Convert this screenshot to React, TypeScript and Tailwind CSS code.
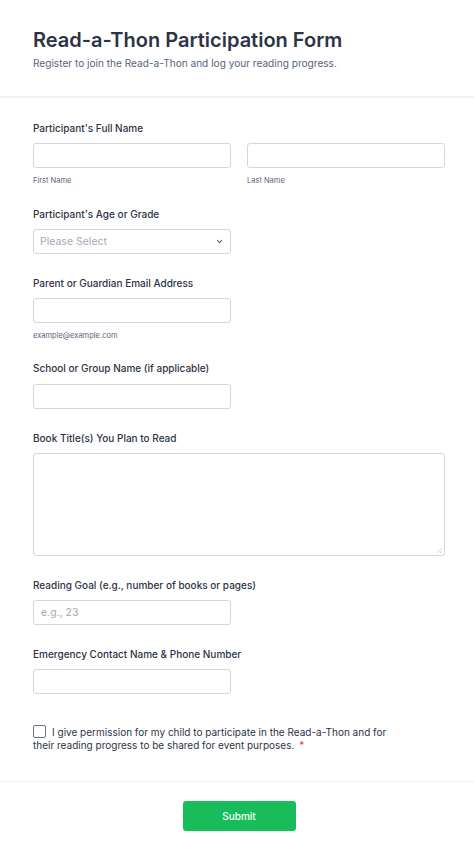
import React from "react";

const font = { fontFamily: "Inter, 'Noto Sans', sans-serif" };

const inputClass =
	"block h-[25px] w-full rounded-[3px] border border-[#d3d6dc] bg-white px-[7px] text-[10.5px] text-[#2c3345] outline-none placeholder:text-[#a4a9b4]";

function Label({ children }: { children: React.ReactNode }) {
	return (
		<label className="block text-[10px] font-medium leading-[14px] text-[#2c3345]">
			{children}
		</label>
	);
}

function Sub({ children }: { children: React.ReactNode }) {
	return (
		<span className="mt-[8px] block text-[7.5px] leading-[10px] text-[#57647e]">
			{children}
		</span>
	);
}

export default function App() {
	return (
		<div className="min-h-[856px] w-[474px] bg-white" style={font}>
			{/* header */}
			<div className="border-b-2 border-[#eff0f2] pb-[26px] pl-[33px] pr-[29px] pt-[27px]">
				<h1 className="text-[20px] font-semibold leading-[26px] text-[#2c3345]">
					Read-a-Thon Participation Form
				</h1>
				<p className="mt-[3px] text-[10.1px] leading-[14px] text-[#57647e]">
					Register to join the Read-a-Thon and log your reading progress.
				</p>
			</div>

			<form className="pl-[33px] pr-[29px]" onSubmit={(e) => e.preventDefault()}>
				{/* full name */}
				<div className="pt-[23px]">
					<Label>Participant's Full Name</Label>
					<div className="mt-[8px] grid grid-cols-2 gap-[16px]">
						<div>
							<input type="text" className={inputClass} />
							<Sub>First Name</Sub>
						</div>
						<div>
							<input type="text" className={inputClass} />
							<Sub>Last Name</Sub>
						</div>
					</div>
				</div>

				{/* age */}
				<div className="pt-[21px]">
					<Label>Participant's Age or Grade</Label>
					<div className="relative mt-[8px] w-[198px]">
						<select
							defaultValue=""
							className="block h-[25px] w-full appearance-none rounded-[3px] border border-[#d3d6dc] bg-white px-[6px] text-[10.5px] text-[#a4a9b4] outline-none"
						>
							<option value="" disabled>
								Please Select
							</option>
							<option>Kindergarten</option>
							<option>Grade 1</option>
							<option>Grade 2</option>
						</select>
						<svg
							className="pointer-events-none absolute right-[8px] top-[9px] h-[7px] w-[7px] text-[#57647e]"
							viewBox="0 0 10 10"
							fill="none"
							stroke="currentColor"
							strokeWidth={1.6}
						>
							<path d="M2 3.5l3 3 3-3" strokeLinecap="round" strokeLinejoin="round" />
						</svg>
					</div>
				</div>

				{/* email */}
				<div className="pt-[22px]">
					<Label>Parent or Guardian Email Address</Label>
					<div className="mt-[8px] w-[198px]">
						<input type="email" className={inputClass} />
					</div>
					<Sub>example@example.com</Sub>
				</div>

				{/* school */}
				<div className="pt-[20px]">
					<Label>School or Group Name (if applicable)</Label>
					<div className="mt-[9px] w-[198px]">
						<input type="text" className={inputClass} />
					</div>
				</div>

				{/* books */}
				<div className="pt-[22px]">
					<Label>Book Title(s) You Plan to Read</Label>
					<div className="relative mt-[8px]">
						<textarea className="block h-[103px] w-full resize-none rounded-[3px] border border-[#d3d6dc] bg-white px-2 py-1 text-[10.5px] text-[#2c3345] outline-none" />
						<svg
							className="pointer-events-none absolute bottom-[3px] right-[3px] h-[6px] w-[6px]"
							viewBox="0 0 6 6"
							stroke="#c4c7cd"
							strokeWidth={0.8}
						>
							<path d="M6 1L1 6M6 4L4 6" />
						</svg>
					</div>
				</div>

				{/* goal */}
				<div className="pt-[22px]">
					<Label>Reading Goal (e.g., number of books or pages)</Label>
					<div className="mt-[8px] w-[198px]">
						<input type="text" placeholder="e.g., 23" className={inputClass} />
					</div>
				</div>

				{/* emergency */}
				<div className="pt-[22px]">
					<Label>Emergency Contact Name &amp; Phone Number</Label>
					<div className="mt-[8px] w-[198px]">
						<input type="text" className={inputClass} />
					</div>
				</div>

				{/* permission */}
				<div className="pb-[29px] pt-[31px]">
					<p className="w-[370px] text-[10px] leading-[13px] text-[#2c3345]">
						<input
							type="checkbox"
							className="mr-[6px] inline-block h-[13px] w-[13px] appearance-none rounded-[2px] border border-[#6b7280] align-[-2px]"
						/>
						I give permission for my child to participate in the Read-a-Thon and for
						their reading progress to be shared for event purposes.
						<span className="ml-[5px] text-[#f23a3c]">*</span>
					</p>
				</div>
			</form>

			{/* footer */}
			<div className="flex justify-center border-t border-[#f1f2f4] pb-[26px] pl-[33px] pr-[29px] pt-[19px]">
				<button
					type="button"
					className="h-[30px] w-[113px] rounded-[3px] bg-[#18bd5b] text-[10px] font-medium text-white"
				>
					Submit
				</button>
			</div>
		</div>
	);
}
